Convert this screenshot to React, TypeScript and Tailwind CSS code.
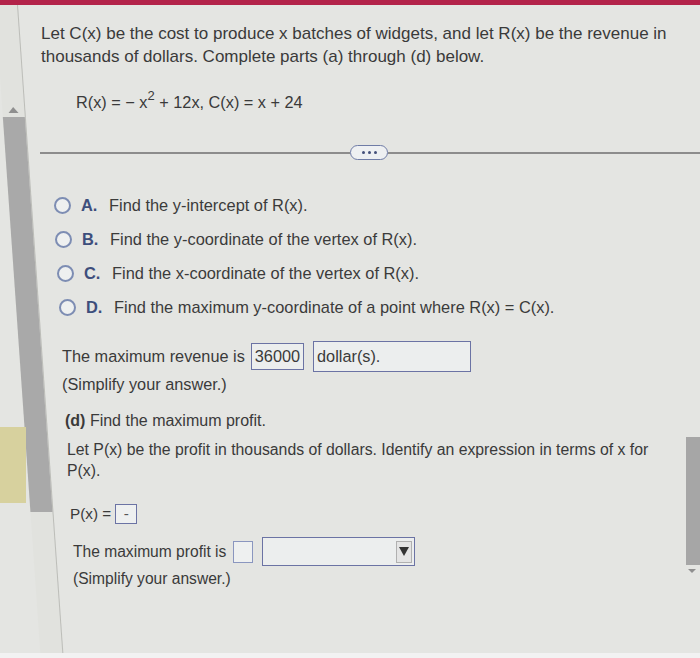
import React from "react";

function Radio({ letter, text, ml }: { letter: string; text: string; ml: string }) {
  return (
    <div className={`flex items-center h-[34px] ${ml}`}>
      <span className="w-[17px] h-[17px] rounded-full border-[2px] border-[#7d8db3] bg-[#eef0f0]" />
      <span className="ml-[10px] w-[28px] font-bold text-[#3d4e7c]">{letter}</span>
      <span className="text-[#3b3b3b]">{text}</span>
    </div>
  );
}

export default function App() {
  return (
    <div
      className="w-[700px] h-[658px] overflow-hidden flex flex-col bg-[#e4e5e2] text-[#3a3a3a]"
      style={{ fontFamily: '"Liberation Sans", Arial, sans-serif' }}
    >
      <div className="h-[5px] bg-[#b3234a] shrink-0" />
      <div className="flex flex-1 relative">
        {/* left scroll strip */}
        <div className="w-[36px] shrink-0 relative">
          <div className="-ml-[5px] w-[23px] h-full flex flex-col border-r border-[#bcbdb9] bg-[#e1e2de] origin-top skew-x-[4deg]">
            <div className="h-[98px]" />
            <div className="flex justify-center w-full h-[14px] items-center">
              <span className="w-0 h-0 border-l-[5px] border-r-[5px] border-b-[6px] border-l-transparent border-r-transparent border-b-[#8f8f8f]" />
            </div>
            <div className="w-full h-[395px] bg-[#a9a9a9]" />
          </div>
          <div className="absolute left-0 top-[422px] w-[26px] h-[76px] bg-[#d7d19e]" />
        </div>

        {/* main */}
        <div className="flex-1 flex flex-col pt-[17px] text-[17px] leading-[23px]">
          <p className="ml-[5px] pr-[4px]">
            Let C(x) be the cost to produce x batches of widgets, and let R(x) be the revenue in thousands of dollars. Complete parts (a) through (d) below.
          </p>
          <p className="ml-[40px] mt-[23px] text-[16.3px]">
            R(x) = − x<span className="text-[13px] relative -top-[8px]">2</span> + 12x, C(x) = x + 24
          </p>
          <div className="mt-[30px] flex items-center -mr-[16px]">
            <div className="w-[310px] h-[2px] bg-[#8c8c8c] ml-[4px]" />
            <div className="w-[38px] h-[15px] rounded-[8px] border-[1.5px] border-[#6f7ca6] bg-[#eef0f2] flex items-center justify-center gap-[3px]">
              <span className="w-[3px] h-[3px] bg-[#44507a] rounded-full" />
              <span className="w-[3px] h-[3px] bg-[#44507a] rounded-full" />
              <span className="w-[3px] h-[3px] bg-[#44507a] rounded-full" />
            </div>
            <div className="flex-1 h-[2px] bg-[#8c8c8c]" />
          </div>

          <div className="mt-[28px] flex flex-col text-[16.4px]">
            <Radio ml="ml-[18px]" letter="A." text="Find the y-intercept of R(x)." />
            <Radio ml="ml-[19px]" letter="B." text="Find the y-coordinate of the vertex of R(x)." />
            <Radio ml="ml-[21px]" letter="C." text="Find the x-coordinate of the vertex of R(x)." />
            <Radio ml="ml-[23px]" letter="D." text="Find the maximum y-coordinate of a point where R(x) = C(x)." />
          </div>

          <div className="mt-[17px] ml-[26px] flex items-center text-[16.3px]">
            <span>The maximum revenue is</span>
            <span className="ml-[6px] h-[27px] px-[3px] border-[1.5px] border-[#6b73a4] bg-[#eceeee] flex items-center">36000</span>
            <span className="ml-[9px] w-[158px] h-[31px] px-[3px] border-[1.5px] border-[#6b73a4] bg-[#eceeee] flex items-center">dollar(s).</span>
          </div>
          <p className="ml-[26px] mt-[1px] text-[16.3px]">(Simplify your answer.)</p>
          <p className="ml-[29px] mt-[13px] text-[16px]">
            <b>(d)</b> Find the maximum profit.
          </p>
          <p className="ml-[31px] mt-[7px] text-[15.8px] leading-[21px] pr-[20px]">
            Let P(x) be the profit in thousands of dollars. Identify an expression in terms of x for P(x).
          </p>
          <div className="ml-[34px] mt-[21px] flex items-center text-[15.3px]">
            <span>P(x) =</span>
            <span className="ml-[4px] w-[22px] h-[20px] border-[1.5px] border-[#6b73a4] bg-[#eef0f0] flex items-center justify-center text-[#555]">-</span>
          </div>
          <div className="ml-[37px] mt-[12px] flex items-center text-[15.6px]">
            <span>The maximum profit is</span>
            <span className="ml-[7px] w-[20px] h-[22px] border-[1.5px] border-[#8a96bf] bg-[#eef0f0]" />
            <span className="ml-[9px] w-[153px] h-[29px] border-[1.5px] border-[#6b73a4] bg-[#eceeee] flex items-center justify-end pr-[2px]">
              <span className="w-[16px] h-[22px] border border-[#b0b0b0] bg-[#e4e4e4] flex items-center justify-center">
                <span className="w-0 h-0 border-l-[5px] border-r-[5px] border-t-[9px] border-l-transparent border-r-transparent border-t-[#333]" />
              </span>
            </span>
          </div>
          <p className="ml-[37px] mt-[1px] text-[15.6px]">(Simplify your answer.)</p>
        </div>

        {/* right scroll strip */}
        <div className="w-[16px] shrink-0 flex flex-col">
          <div className="h-[432px]" />
          <div className="ml-[2px] w-[14px] h-[128px] bg-[#a6a6a6]" />
          <div className="flex justify-center h-[12px] items-center">
            <span className="w-0 h-0 border-l-[4px] border-r-[4px] border-t-[4px] border-l-transparent border-r-transparent border-t-[#8f8f8f]" />
          </div>
        </div>
      </div>
      <div className="h-[5px] bg-[#f2f2f2] shrink-0" />
    </div>
  );
}
